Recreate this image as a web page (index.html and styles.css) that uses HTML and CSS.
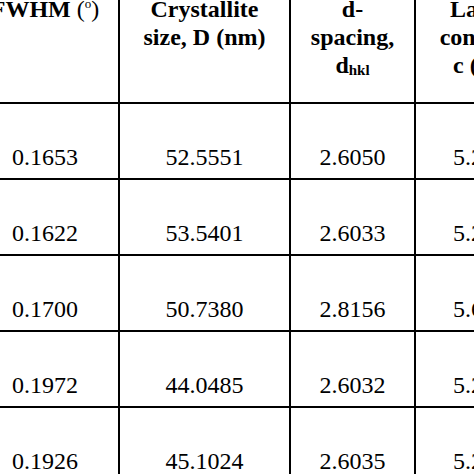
FILE: index.html
```html
<!DOCTYPE html>
<html lang="en">
<head>
<meta charset="utf-8">
<title>Crystallite parameters</title>
<link rel="stylesheet" href="styles.css">
</head>
<body>
<div class="viewport">
  <table class="xrd-table">
    <colgroup>
      <col class="col-fwhm">
      <col class="col-size">
      <col class="col-dspacing">
      <col class="col-lattice">
    </colgroup>
    <thead>
      <tr>
        <th>FWHM <span class="unit">(<sup>o</sup>)</span></th>
        <th>Crystallite<br>size, D (nm)</th>
        <th>d-<br>spacing,<br>d<sub>hkl</sub></th>
        <th>Lattice<br>constant,<br>c (nm)</th>
      </tr>
    </thead>
    <tbody>
      <tr><td>0.1653</td><td>52.5551</td><td>2.6050</td><td>5.2100</td></tr>
      <tr><td>0.1622</td><td>53.5401</td><td>2.6033</td><td>5.2066</td></tr>
      <tr><td>0.1700</td><td>50.7380</td><td>2.8156</td><td>5.6312</td></tr>
      <tr><td>0.1972</td><td>44.0485</td><td>2.6032</td><td>5.2064</td></tr>
      <tr><td>0.1926</td><td>45.1024</td><td>2.6035</td><td>5.2070</td></tr>
    </tbody>
  </table>
</div>
</body>
</html>
```

FILE: styles.css
```css
html, body {
  margin: 0;
  padding: 0;
  background: #fff;
}

.viewport {
  width: 474px;
  height: 474px;
  overflow: hidden;
}

.xrd-table {
  border-collapse: collapse;
  table-layout: fixed;
  width: 588px;
  margin: -20px 0 0 -30px;
  font-family: "Liberation Serif", "Times New Roman", serif;
  font-size: 24px;
  line-height: 28px;
  color: #000;
}

.col-fwhm { width: 148px; }
.col-size { width: 171px; }
.col-dspacing { width: 125px; }
.col-lattice { width: 142px; }

.xrd-table th,
.xrd-table td {
  box-sizing: border-box;
  border: 2px solid #000;
  padding: 0;
  text-align: center;
}

.xrd-table th {
  height: 122px;
  padding-top: 13px;
  vertical-align: top;
  font-weight: bold;
}

.xrd-table td {
  height: 76px;
  padding-bottom: 7px;
  vertical-align: bottom;
  font-weight: normal;
}

.unit {
  font-weight: normal;
}

.unit sup {
  font-size: 13px;
  line-height: 0;
  vertical-align: 9px;
}

.xrd-table th sub {
  font-size: 15px;
  line-height: 0;
  vertical-align: -2px;
}
```
